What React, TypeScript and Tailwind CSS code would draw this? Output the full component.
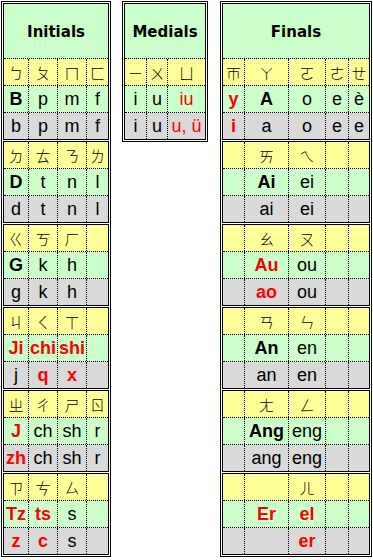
type Cell = string | { t: string; s: "b" | "r" | "rn" };

type Table = {
  title: string;
  cols: number[];
  groups: Cell[][][];
};

const B = (t: string): Cell => ({ t, s: "b" });
const R = (t: string): Cell => ({ t, s: "r" });
const RN = (t: string): Cell => ({ t, s: "rn" });

const initials: Table = {
  title: "Initials",
  cols: [25, 29, 29, 21],
  groups: [
    [["ㄅ", "ㄆ", "ㄇ", "ㄈ"], [B("B"), "p", "m", "f"], ["b", "p", "m", "f"]],
    [["ㄉ", "ㄊ", "ㄋ", "ㄌ"], [B("D"), "t", "n", "l"], ["d", "t", "n", "l"]],
    [["ㄍ", "ㄎ", "ㄏ", ""], [B("G"), "k", "h", ""], ["g", "k", "h", ""]],
    [["ㄐ", "ㄑ", "ㄒ", ""], [R("Ji"), R("chi"), R("shi"), ""], ["j", R("q"), R("x"), ""]],
    [["ㄓ", "ㄔ", "ㄕ", "ㄖ"], [R("J"), "ch", "sh", "r"], [R("zh"), "ch", "sh", "r"]],
    [["ㄗ", "ㄘ", "ㄙ", ""], [R("Tz"), R("ts"), "s", ""], [R("z"), R("c"), "s", ""]],
  ],
};

const medials: Table = {
  title: "Medials",
  cols: [22, 21, 37],
  groups: [[["ㄧ", "ㄨ", "ㄩ"], ["i", "u", RN("iu")], ["i", "u", RN("u, ü")]]],
};

const finals: Table = {
  title: "Finals",
  cols: [22, 44, 37, 23, 20],
  groups: [
    [["ㄭ", "ㄚ", "ㄛ", "ㄜ", "ㄝ"], [R("y"), B("A"), "o", "e", "è"], [R("i"), "a", "o", "e", "e"]],
    [["", "ㄞ", "ㄟ", "", ""], ["", B("Ai"), "ei", "", ""], ["", "ai", "ei", "", ""]],
    [["", "ㄠ", "ㄡ", "", ""], ["", R("Au"), "ou", "", ""], ["", R("ao"), "ou", "", ""]],
    [["", "ㄢ", "ㄣ", "", ""], ["", B("An"), "en", "", ""], ["", "an", "en", "", ""]],
    [["", "ㄤ", "ㄥ", "", ""], ["", B("Ang"), "eng", "", ""], ["", "ang", "eng", "", ""]],
    [["", "", "ㄦ", "", ""], ["", R("Er"), R("el"), "", ""], ["", "", R("er"), "", ""]],
  ],
};

const rowBg = ["bg-[#ffff99]", "bg-[#ccffcc]", "bg-[#d9d9d9]"];

function CellText({ c, zhuyin }: { c: Cell; zhuyin: boolean }) {
  if (typeof c === "string") {
    if (zhuyin)
      return (
        <span className="font-['Noto_Sans_CJK_TC',sans-serif] text-[15px] font-light leading-none text-black">
          {c}
        </span>
      );
    return <span className="text-black">{c}</span>;
  }
  if (c.s === "b") return <span className="font-bold text-black">{c.t}</span>;
  if (c.s === "r") return <span className="font-bold text-[#ff0000]">{c.t}</span>;
  return <span className="text-[#ff0000]">{c.t}</span>;
}

function Column({ table }: { table: Table }) {
  return (
    <div className="flex flex-col gap-px border border-black p-px">
      {table.groups.map((group, gi) => (
        <div key={gi} className="border border-black">
          {gi === 0 && (
            <div className="flex h-[55px] items-center justify-center border-b border-dotted border-black bg-[#ccffcc] pt-[2px] font-['DejaVu_Sans',sans-serif] text-[15px] font-bold text-black">
              {table.title}
            </div>
          )}
          {group.map((row, ri) => (
            <div
              key={ri}
              className={`flex ${rowBg[ri]} ${ri < 2 ? "h-[27px] border-b border-dotted border-black" : "h-[26px]"}`}
            >
              {row.map((c, ci) => (
                <div
                  key={ci}
                  style={{ width: table.cols[ci] }}
                  className={`flex shrink-0 items-center justify-center whitespace-nowrap leading-none ${
                    ci < row.length - 1 ? "border-r border-dotted border-black" : ""
                  }`}
                >
                  <CellText c={c} zhuyin={ri === 0} />
                </div>
              ))}
            </div>
          ))}
        </div>
      ))}
    </div>
  );
}

export default function App() {
  return (
    <div className="flex h-[560px] w-[373px] items-start bg-white pl-px pt-px font-['Liberation_Sans',Arial,sans-serif] text-[18px]">
      <div className="w-[110px]">
        <Column table={initials} />
      </div>
      <div className="ml-[11px] w-[86px]">
        <Column table={medials} />
      </div>
      <div className="ml-[12px] w-[152px]">
        <Column table={finals} />
      </div>
    </div>
  );
}
